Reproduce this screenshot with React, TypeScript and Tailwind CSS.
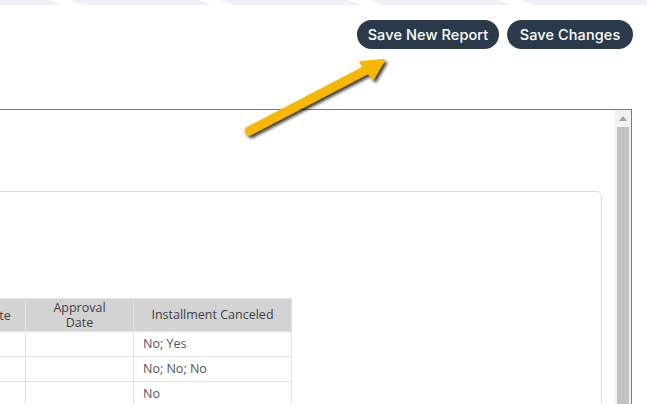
import React from 'react';

const TopStrip = () => (
    <div className="h-[5px] bg-[#eef0f5] relative overflow-hidden">
        <svg className="absolute inset-0" width="647" height="5" viewBox="0 0 647 5">
            {[48, 198, 348, 498].map((x) => (
                <path key={x} d={`M${x} 0 L${x + 22} 0 L${x + 36} 5 L${x + 14} 5 Z`} fill="#ffffff" />
            ))}
        </svg>
    </div>
);

const Arrow = () => (
    <svg className="absolute left-0 top-0 pointer-events-none" width="647" height="404" viewBox="0 0 647 404">
        <defs>
            <filter id="shadow" x="-20%" y="-20%" width="140%" height="140%">
                <feDropShadow dx="2.5" dy="2.5" stdDeviation="1.4" floodColor="#000" floodOpacity="0.75" />
            </filter>
        </defs>
        <g filter="url(#shadow)">
            <line x1="249" y1="131" x2="366" y2="70" stroke="#f8b700" strokeWidth="9" strokeLinecap="round" />
            <path d="M384 60 L360 62 L373 79 Z" fill="#f8b700" stroke="#f8b700" strokeWidth="2" strokeLinejoin="round" />
        </g>
    </svg>
);

const Scrollbar = () => (
    <div className="w-[16px] shrink-0 bg-[#f1f1f1] flex flex-col">
        <div className="h-[17px] flex items-center justify-center">
            <svg width="8" height="5" viewBox="0 0 8 5">
                <path d="M0 5 L4 0 L8 5 Z" fill="#a3a3a3" />
            </svg>
        </div>
        <div className="flex-1 mx-[2px] bg-[#c1c1c1]" />
    </div>
);

const rows = ['No; Yes', 'No; No; No', 'No'];

const App = () => {
    return (
        <div className="relative w-[647px] h-[404px] overflow-hidden bg-white" style={{ fontFamily: 'Inter, "Open Sans", sans-serif' }}>
            <TopStrip />

            {/* Header actions */}
            <div className="flex justify-end gap-2 pt-[15px] pr-[14px]">
                <button className="h-[29px] w-[142px] rounded-full bg-[#2b3a4b] text-white text-[14.5px] font-medium tracking-[0.1px]">
                    Save New Report
                </button>
                <button className="h-[29px] w-[126px] rounded-full bg-[#2b3a4b] text-white text-[14.5px] font-medium tracking-[0.1px]">
                    Save Changes
                </button>
            </div>

            {/* Report panel */}
            <div className="mt-[60px] ml-[-4px] w-[636px] h-[300px] border-t border-r border-[#7a7a7a] flex">
                <div className="flex-1 pt-[81px] pr-[13px]">
                    <div className="ml-[-8px] h-[260px] border border-[#dcdcdc] rounded-[5px] pt-[106px]">
                        <table
                            className="ml-[-48px] border-collapse text-[12.5px]"
                            style={{ fontFamily: '"Open Sans", "DejaVu Sans", sans-serif' }}
                        >
                            <thead>
                                <tr className="bg-[#d3d3d3] text-[#3f3f3f]">
                                    <th className="w-[84px] h-[33px] border border-[#e2e2e2] font-normal leading-[15px] whitespace-nowrap">Due Date</th>
                                    <th className="w-[108px] h-[33px] border border-[#e2e2e2] font-normal leading-[15px]">
                                        Approval
                                        <br />
                                        Date
                                    </th>
                                    <th className="w-[158px] h-[33px] border border-[#e2e2e2] font-normal">Installment Canceled</th>
                                </tr>
                            </thead>
                            <tbody className="text-[#555]">
                                {rows.map((r) => (
                                    <tr key={r}>
                                        <td className="h-[25px] border border-[#e2e2e2]"></td>
                                        <td className="h-[25px] border border-[#e2e2e2]"></td>
                                        <td className="h-[25px] border border-[#e2e2e2] pl-[9px]">{r}</td>
                                    </tr>
                                ))}
                            </tbody>
                        </table>
                    </div>
                </div>
                <Scrollbar />
            </div>

            <Arrow />
        </div>
    );
};

export default App;
